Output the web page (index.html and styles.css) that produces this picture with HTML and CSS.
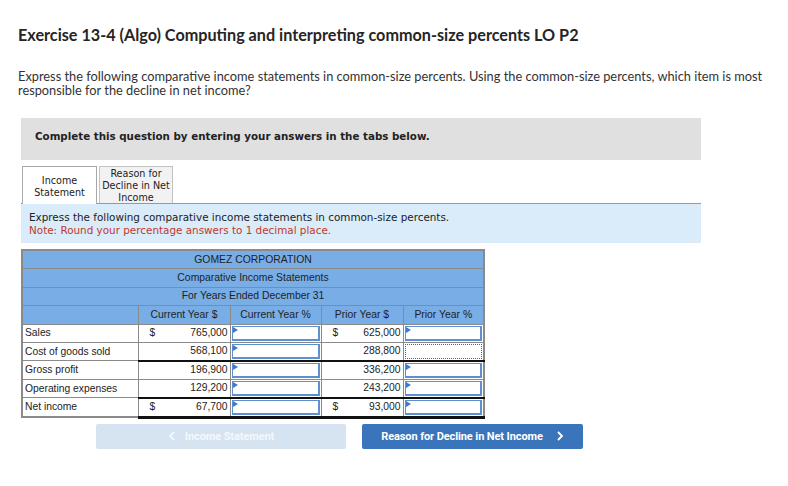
FILE: index.html
```html
<!DOCTYPE html>
<html>
<head>
<meta charset="utf-8">
<link rel="stylesheet" href="styles.css">
</head>
<body>
<div class="page">
  <h1 class="title">Exercise 13-4 (Algo) Computing and interpreting common-size percents LO P2</h1>
  <p class="question">Express the following comparative income statements in common-size percents. Using the common-size percents, which item is most responsible for the decline in net income?</p>

  <div class="instructions">Complete this question by entering your answers in the tabs below.</div>

  <div class="tabs">
    <div class="tab active">Income<br>Statement</div>
    <div class="tab">Reason for<br>Decline in Net<br>Income</div>
  </div>
  <div class="tabpanel">
    <div>Express the following comparative income statements in common-size percents.</div>
    <div class="note">Note: Round your percentage answers to 1 decimal place.</div>
  </div>

  <table class="statement">
    <colgroup>
      <col class="c-label"><col class="c-cur"><col class="c-curp"><col class="c-pri"><col class="c-prip">
    </colgroup>
    <thead>
      <tr class="hrow"><th colspan="5">GOMEZ CORPORATION</th></tr>
      <tr class="hrow"><th colspan="5">Comparative Income Statements</th></tr>
      <tr class="hrow"><th colspan="5">For Years Ended December 31</th></tr>
      <tr class="hrow cols"><th class="blank"></th><th>Current Year $</th><th>Current Year %</th><th>Prior Year $</th><th>Prior Year %</th></tr>
    </thead>
    <tbody>
      <tr class="r-thin">
        <td class="lbl">Sales</td>
        <td class="num"><span class="cur">$</span><span>765,000</span></td>
        <td class="inp"><div class="box flag"></div></td>
        <td class="num"><span class="cur">$</span><span>625,000</span></td>
        <td class="inp"><div class="box flag"></div></td>
      </tr>
      <tr class="r-total">
        <td class="lbl">Cost of goods sold</td>
        <td class="num"><span></span><span>568,100</span></td>
        <td class="inp"><div class="box flag"></div></td>
        <td class="num"><span></span><span>288,800</span></td>
        <td class="inp"><div class="box focus"></div></td>
      </tr>
      <tr class="r-thin">
        <td class="lbl">Gross profit</td>
        <td class="num"><span></span><span>196,900</span></td>
        <td class="inp"><div class="box flag"></div></td>
        <td class="num"><span></span><span>336,200</span></td>
        <td class="inp"><div class="box flag"></div></td>
      </tr>
      <tr class="r-total">
        <td class="lbl">Operating expenses</td>
        <td class="num"><span></span><span>129,200</span></td>
        <td class="inp"><div class="box flag"></div></td>
        <td class="num"><span></span><span>243,200</span></td>
        <td class="inp"><div class="box flag"></div></td>
      </tr>
      <tr class="r-final">
        <td class="lbl">Net income</td>
        <td class="num"><span class="cur">$</span><span>67,700</span></td>
        <td class="inp"><div class="box flag"></div></td>
        <td class="num"><span class="cur">$</span><span>93,000</span></td>
        <td class="inp"><div class="box flag"></div></td>
      </tr>
    </tbody>
  </table>

  <div class="nav">
    <div class="btn prev">
      <svg width="8" height="10" viewBox="0 0 8 10"><polyline points="6,1 2,5 6,9" fill="none" stroke="currentColor" stroke-width="1.8"/></svg>
      <span>Income Statement</span>
    </div>
    <div class="btn next">
      <span>Reason for Decline in Net Income</span>
      <svg width="8" height="10" viewBox="0 0 8 10"><polyline points="2,1 6,5 2,9" fill="none" stroke="currentColor" stroke-width="1.8"/></svg>
    </div>
  </div>
</div>
</body>
</html>
```
FILE: styles.css
```css
* { box-sizing: border-box; }
html, body { margin: 0; padding: 0; background: #fff; }
body { font-family: "Lato", "Liberation Sans", sans-serif; color: #2b2b2b; }

.page { padding: 25px 0 0 0; width: 788px; }

.title {
  margin: 0 0 0 18px;
  font-family: "Lato", sans-serif;
  font-size: 16.2px;
  font-weight: 700;
  line-height: 20px;
  color: #252525;
}

.question {
  margin: 24px 20px 0 18px;
  font-family: "Lato", sans-serif;
  font-size: 12.8px;
  line-height: 14px;
  color: #333;
}

.instructions {
  margin: 21px 0 0 21px;
  width: 680px;
  height: 42px;
  background: #e0e0e0;
  padding: 11px 0 0 14px;
  font-family: "DejaVu Sans", Verdana, sans-serif;
  font-weight: 700;
  font-size: 10.3px;
  line-height: 14px;
  color: #222;
}

.tabs {
  display: flex;
  gap: 2px;
  margin: 6px 0 0 22px;
  height: 37px;
  position: relative;
  z-index: 1;
}
.tab {
  width: 74px;
  height: 37px;
  border: 1px solid #c2c2c2;
  border-bottom: none;
  background: #f2f2f2;
  font-family: "DejaVu Sans", Verdana, sans-serif;
  font-size: 9.6px;
  line-height: 12px;
  text-align: center;
  color: #222;
  padding-top: 1px;
  display: flex;
  align-items: center;
  justify-content: center;
}
.tab.active {
  width: 75px;
  background: #fff;
  border-color: #a8a8a8;
  height: 38px;
  margin-bottom: -1px;
  padding-top: 2px;
}

.tabpanel {
  margin: 0 0 0 21px;
  width: 680px;
  height: 40px;
  border-top: 1px solid #999;
  background: #daebf9;
  padding: 7px 0 0 8px;
  font-family: "DejaVu Sans", Verdana, sans-serif;
  font-size: 10.4px;
  line-height: 13px;
  color: #222;
}
.tabpanel .note { color: #c0392b; }

.statement {
  margin: 6px 0 0 21px;
  width: 462px;
  border-collapse: collapse;
  table-layout: fixed;
  font-family: "Liberation Sans", Arial, sans-serif;
  font-size: 10.3px;
  color: #222;
}
.c-label { width: 116px; }
.c-cur { width: 92px; }
.c-curp { width: 91px; }
.c-pri { width: 82px; }
.c-prip { width: 81px; }

.statement th {
  background: #78ade6;
  border: 1px solid #8a8a8a;
  height: 18.6px;
  padding: 0;
  font-weight: 400;
  text-align: center;
  color: #1f1f1f;
  font-size: 10.4px;
  line-height: 12px;
}
.statement .hrow:first-child th { border-top: 2px solid #8a8a8a; }
.statement th:first-child { border-left: 2px solid #8a8a8a; }
.statement th:last-child { border-right: 2px solid #8a8a8a; }

.statement td {
  height: 17.2px;
  padding: 0;
  border: 1px solid #8a8a8a;
  vertical-align: middle;
  line-height: 12px;
}
.statement td.lbl { padding-left: 2px; border-left: 2px solid #8a8a8a; }
.statement td:last-child { border-right: 2px solid #8a8a8a; }
.statement td.num { padding: 0 2px 0 11px; }
.num span:last-child { float: right; }
.num .cur { float: left; }

.r-total td.num, .r-total td.inp { border-bottom: 2px solid #111; }
.r-final td { border-bottom: 2px solid #8a8a8a; }
.r-final td.num, .r-final td.inp { border-bottom: 3px solid #111; }

.statement td.inp { padding: 1px 1px; }
.box {
  height: 15px;
  border: 2px solid #5e8fd0;
  border-left-width: 1px;
  border-top-width: 1px;
  background: #fff;
  position: relative;
}
.box.flag::before {
  content: "";
  position: absolute;
  left: 0;
  top: 0;
  border-top: 3px solid transparent;
  border-bottom: 3px solid transparent;
  border-left: 5px solid #3d7ad0;
}
.box.focus {
  border: 1px dotted #3a64a8;
}

.nav {
  display: flex;
  gap: 16px;
  margin: 5px 0 0 96px;
}
.btn {
  height: 25px;
  border-radius: 2px;
  display: flex;
  align-items: center;
  justify-content: center;
  gap: 9px;
  font-family: "Roboto", sans-serif;
  font-weight: 700;
  font-size: 11px;
  letter-spacing: -0.1px;
}
.btn.prev { width: 250px; background: #d6e3f1; color: #f4f8fc; }
.btn.next { width: 221px; background: #3a75bc; color: #fff; gap: 13px; }
```
